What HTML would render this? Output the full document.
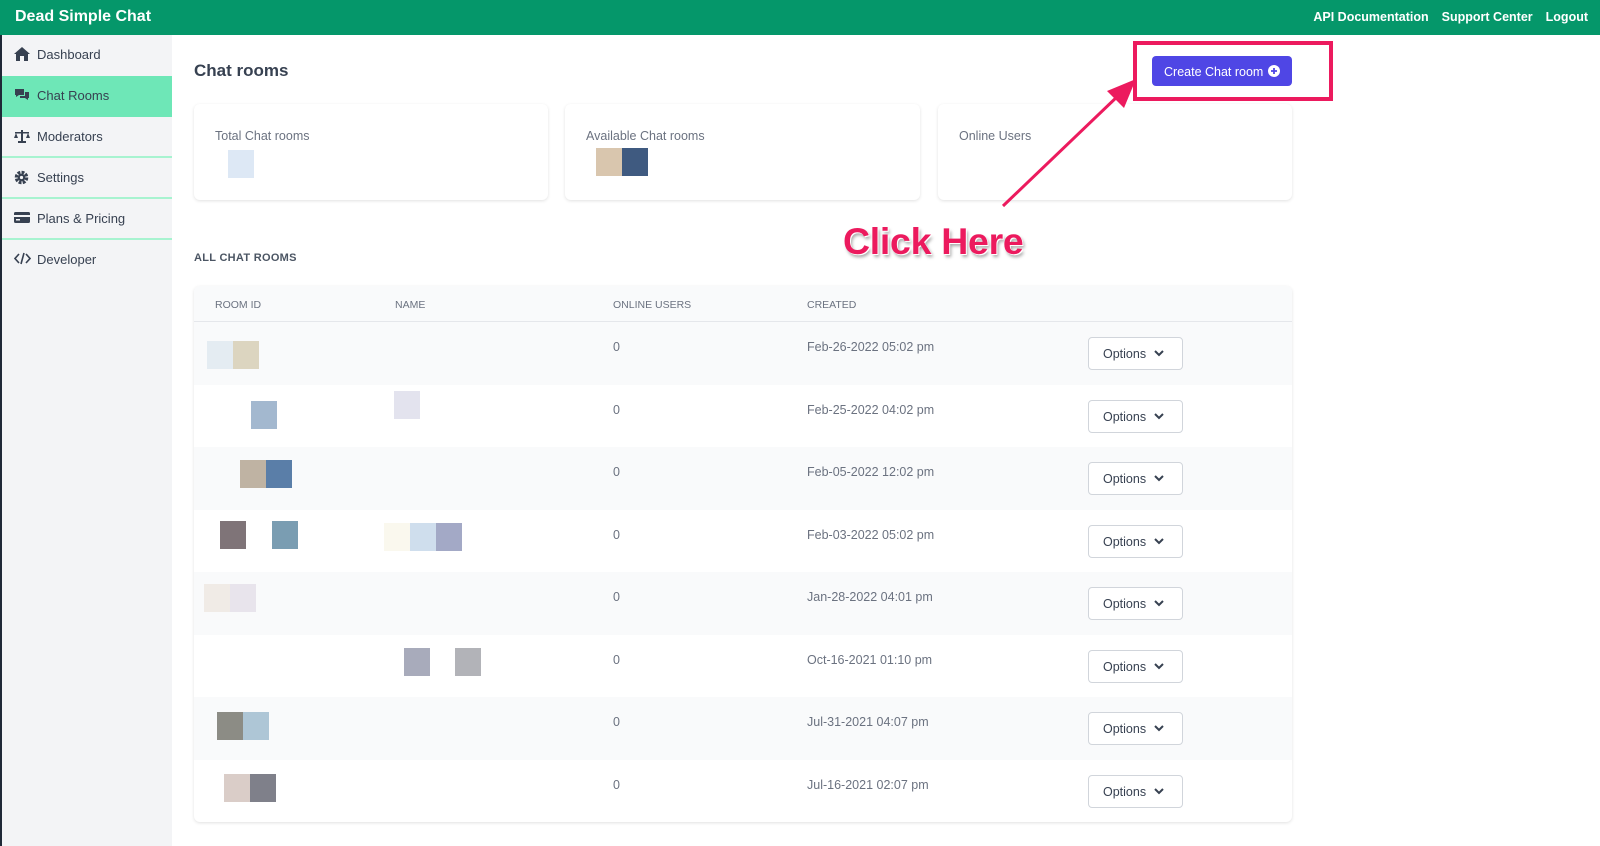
<!DOCTYPE html>
<html><head><meta charset="utf-8"><style>
*{box-sizing:border-box;margin:0;padding:0}
body{width:1600px;height:846px;overflow:hidden;font-family:"Liberation Sans",sans-serif;background:#fff;position:relative;color:#374151}
.hdr{position:absolute;left:0;top:0;width:1600px;height:35px;background:#05976a;color:#fff}
.logo{position:absolute;left:15px;top:8px;font-size:16px;font-weight:bold}
.nav{position:absolute;right:12px;top:10px;font-size:12.5px;font-weight:bold}
.nav span{margin-left:13px}
.side{position:absolute;left:0;top:35px;width:172px;height:811px;background:#f3f4f6;border-left:2px solid #1f2937}
.it{position:absolute;left:0;width:170px;height:41px;font-size:13px;color:#374151;padding:12px 0 0 35px}
.it.b{border-bottom:2px solid #a7f3d0}
.it.a{background:#6ee7b7}
.it svg{position:absolute;left:12px;top:12px}
h1{position:absolute;left:194px;top:61px;font-size:17px;font-weight:bold;color:#374151}
.card{position:absolute;top:104px;height:96px;border-radius:6px;box-shadow:0 1px 3px rgba(0,0,0,.12);background:#fff}
.card .t{position:absolute;left:21px;top:25px;font-size:12.5px;color:#6b7280}
.sq{position:absolute;width:26px;height:28px}
.btn{position:absolute;left:1152px;top:56px;width:140px;height:30px;background:#4f46e5;border-radius:4px;color:#fff;font-size:12.5px;padding:9px 0 0 12px}
.pink{position:absolute;left:1133px;top:41px;width:200px;height:60px;border:4px solid #ec1a5e}
.lbl{position:absolute;left:194px;top:252px;font-size:11px;font-weight:bold;color:#4b5563;letter-spacing:.3px}
.tbl{position:absolute;left:194px;top:286px;width:1098px;height:536px;box-shadow:0 1px 3px rgba(0,0,0,.12);border-radius:6px;overflow:hidden;background:#fff}
.th{position:absolute;top:0;left:0;width:100%;height:36px;background:#f9fafb;border-bottom:1px solid #e5e7eb;font-size:10.5px;color:#6b7280}
.th span,.row span{position:absolute}
.th span{top:13px}
.row{position:absolute;left:0;width:100%;height:62.5px;font-size:12.5px;color:#6b7280}
.row.g{background:#f9fafb}
.row span{top:18px}
.opt{position:absolute;left:894px;top:15px;width:95px;height:33px;border:1px solid #d1d5db;border-radius:4px;background:#fff;font-size:12.5px;padding:9px 0 0 14px;color:#374151}
.opt svg{position:absolute;right:18px;top:12px}
.click{position:absolute;left:843px;top:220px;font-size:37.5px;font-weight:bold;color:#ec1a5e;text-shadow:1px 1px 0 #fff,2px 3px 3px rgba(0,0,0,.35);letter-spacing:-.3px}
</style></head><body>
<div class="hdr"><div class="logo">Dead Simple Chat</div><div class="nav"><span>API Documentation</span><span>Support Center</span><span>Logout</span></div></div>
<div class="side">
<div class="it" style="top:0"><svg width="16" height="14" viewBox="0 0 16 14"><path d="M8 0L0 7h2v7h4V9h4v5h4V7h2z" fill="#374151"/></svg>Dashboard</div>
<div class="it a" style="top:41px"><svg width="16" height="14" viewBox="0 0 16 14"><path d="M1 1h9v6H5l-3 2V7H1z" fill="#374151"/><path d="M11 4h4v6h-1v2l-3-2H6V8h5z" fill="#374151"/></svg>Chat Rooms</div>
<div class="it b" style="top:82px"><svg width="16" height="14" viewBox="0 0 16 14"><path d="M7 1h2v11h3v2H4v-2h3zM1 3h14v1.5H1zM0 9l2-5 2 5zM12 9l2-5 2 5z" fill="#374151"/></svg>Moderators</div>
<div class="it b" style="top:123px"><svg width="15" height="15" viewBox="0 0 16 16"><circle cx="8" cy="8" r="5.5" fill="none" stroke="#374151" stroke-width="3.5" stroke-dasharray="3 1.3"/><circle cx="8" cy="8" r="4" fill="#374151"/><circle cx="8" cy="8" r="1.7" fill="#f3f4f6"/></svg>Settings</div>
<div class="it b" style="top:164px"><svg width="16" height="13" viewBox="0 0 16 13"><rect x="0" y="1" width="16" height="11" rx="1.5" fill="#374151"/><rect x="0" y="4" width="16" height="2" fill="#f3f4f6"/><rect x="2" y="8" width="4" height="1.5" fill="#f3f4f6"/></svg>Plans &amp; Pricing</div>
<div class="it" style="top:205px"><svg width="17" height="13" viewBox="0 0 17 13"><path d="M5 2L1 6.5 5 11M12 2l4 4.5-4 4.5M10 1L7 12" fill="none" stroke="#374151" stroke-width="1.6"/></svg>Developer</div>
</div>
<h1>Chat rooms</h1>
<div class="card" style="left:194px;width:354px"><div class="t">Total Chat rooms</div><div class="sq" style="left:34px;top:46px;background:#dde8f5"></div></div>
<div class="card" style="left:565px;width:355px"><div class="t">Available Chat rooms</div><div class="sq" style="left:31px;top:44px;background:#d9c6ae"></div><div class="sq" style="left:57px;top:44px;background:#3f5a80"></div></div>
<div class="card" style="left:938px;width:354px"><div class="t">Online Users</div></div>
<div class="pink"></div>
<div class="btn">Create Chat room <svg width="12" height="12" viewBox="0 0 12 12" style="position:absolute;right:12px;top:9px"><circle cx="6" cy="6" r="6" fill="#fff"/><path d="M6 3v6M3 6h6" stroke="#4f46e5" stroke-width="1.8"/></svg></div>
<svg width="1600" height="846" style="position:absolute;left:0;top:0;pointer-events:none"><line x1="1003" y1="206" x2="1120" y2="94" stroke="#ec1a5e" stroke-width="3"/><path d="M1136 79L1107 91 1124 108z" fill="#ec1a5e"/></svg>
<div class="click">Click Here</div>
<div class="lbl">ALL CHAT ROOMS</div>
<div class="tbl">
<div class="th"><span style="left:21px">ROOM ID</span><span style="left:201px">NAME</span><span style="left:419px">ONLINE USERS</span><span style="left:613px">CREATED</span></div>
<div class="row g" style="top:36px"><span style="left:419px">0</span><span style="left:613px">Feb-26-2022 05:02 pm</span><div class="opt">Options<svg width="10" height="7" viewBox="0 0 10 7"><path d="M1 1l4 4 4-4" fill="none" stroke="#374151" stroke-width="2"/></svg></div></div>
<div class="row" style="top:98.5px"><span style="left:419px">0</span><span style="left:613px">Feb-25-2022 04:02 pm</span><div class="opt">Options<svg width="10" height="7" viewBox="0 0 10 7"><path d="M1 1l4 4 4-4" fill="none" stroke="#374151" stroke-width="2"/></svg></div></div>
<div class="row g" style="top:161px"><span style="left:419px">0</span><span style="left:613px">Feb-05-2022 12:02 pm</span><div class="opt">Options<svg width="10" height="7" viewBox="0 0 10 7"><path d="M1 1l4 4 4-4" fill="none" stroke="#374151" stroke-width="2"/></svg></div></div>
<div class="row" style="top:223.5px"><span style="left:419px">0</span><span style="left:613px">Feb-03-2022 05:02 pm</span><div class="opt">Options<svg width="10" height="7" viewBox="0 0 10 7"><path d="M1 1l4 4 4-4" fill="none" stroke="#374151" stroke-width="2"/></svg></div></div>
<div class="row g" style="top:286px"><span style="left:419px">0</span><span style="left:613px">Jan-28-2022 04:01 pm</span><div class="opt">Options<svg width="10" height="7" viewBox="0 0 10 7"><path d="M1 1l4 4 4-4" fill="none" stroke="#374151" stroke-width="2"/></svg></div></div>
<div class="row" style="top:348.5px"><span style="left:419px">0</span><span style="left:613px">Oct-16-2021 01:10 pm</span><div class="opt">Options<svg width="10" height="7" viewBox="0 0 10 7"><path d="M1 1l4 4 4-4" fill="none" stroke="#374151" stroke-width="2"/></svg></div></div>
<div class="row g" style="top:411px"><span style="left:419px">0</span><span style="left:613px">Jul-31-2021 04:07 pm</span><div class="opt">Options<svg width="10" height="7" viewBox="0 0 10 7"><path d="M1 1l4 4 4-4" fill="none" stroke="#374151" stroke-width="2"/></svg></div></div>
<div class="row" style="top:473.5px"><span style="left:419px">0</span><span style="left:613px">Jul-16-2021 02:07 pm</span><div class="opt">Options<svg width="10" height="7" viewBox="0 0 10 7"><path d="M1 1l4 4 4-4" fill="none" stroke="#374151" stroke-width="2"/></svg></div></div>
<div class="sq" style="left:13px;top:55px;background:#e4ecf2"></div><div class="sq" style="left:39px;top:55px;background:#dcd5c0"></div>
<div class="sq" style="left:57px;top:115px;background:#a3b8cf"></div><div class="sq" style="left:200px;top:105px;background:#e3e3ee"></div>
<div class="sq" style="left:46px;top:174px;background:#bfb3a3"></div><div class="sq" style="left:72px;top:174px;background:#5a7ea8"></div>
<div class="sq" style="left:26px;top:235px;background:#7f7478"></div><div class="sq" style="left:78px;top:235px;background:#7a9db2"></div>
<div class="sq" style="left:190px;top:237px;background:#faf8ee"></div><div class="sq" style="left:216px;top:237px;background:#cfdeed"></div><div class="sq" style="left:242px;top:237px;background:#a3a9c6"></div>
<div class="sq" style="left:10px;top:298px;background:#f0ebe6"></div><div class="sq" style="left:36px;top:298px;background:#e8e4ec"></div>
<div class="sq" style="left:210px;top:362px;background:#a8abbb"></div><div class="sq" style="left:261px;top:362px;background:#b2b3b8"></div>
<div class="sq" style="left:23px;top:426px;background:#8c8c85"></div><div class="sq" style="left:49px;top:426px;background:#aec6d6"></div>
<div class="sq" style="left:30px;top:488px;background:#dacdc8"></div><div class="sq" style="left:56px;top:488px;background:#7f808a"></div>
</div>
</body></html>
